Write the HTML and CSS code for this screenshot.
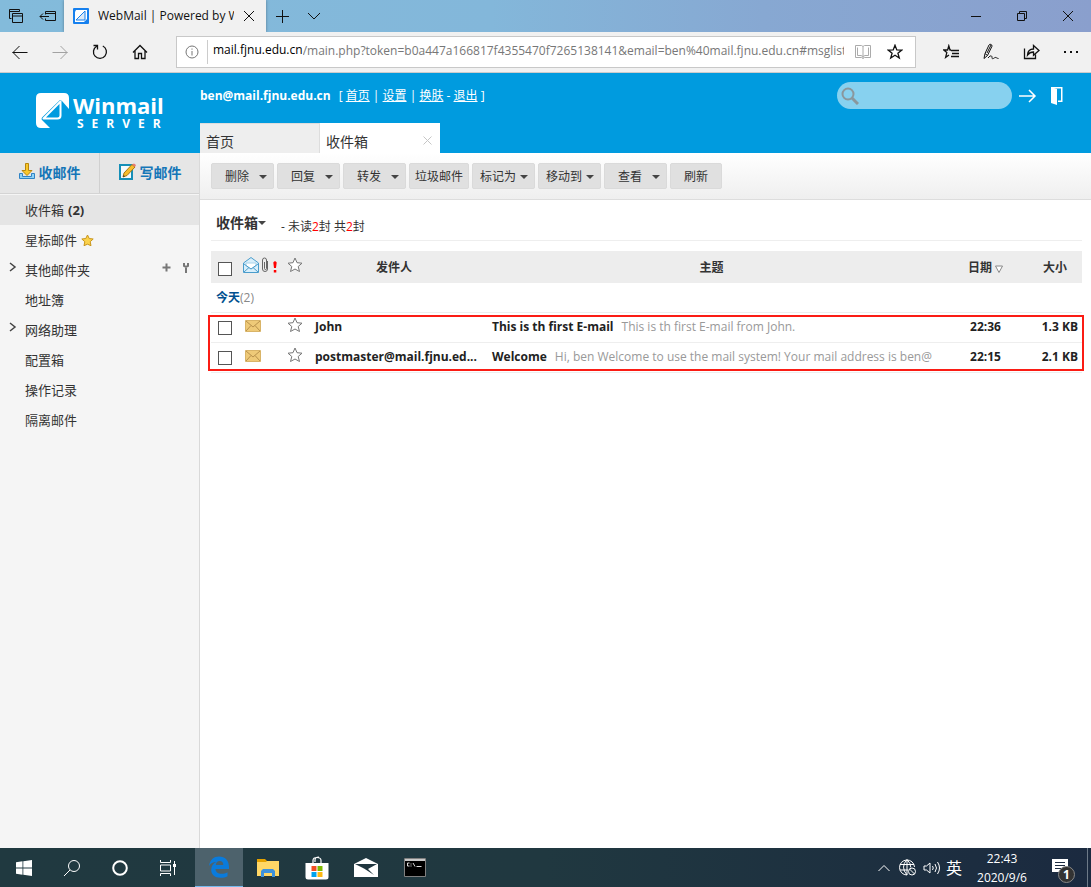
FILE: index.html
```html
<!DOCTYPE html>
<html lang="zh-CN">
<head>
<meta charset="utf-8">
<title>WebMail | Powered by Winmail Server</title>
<link rel="stylesheet" href="styles.css">
</head>
<body>
<header class="titlebar">
  <button class="tb-btn" aria-label="Tabs set aside"><svg width="16" height="16" viewBox="0 0 16 16" class="line"><path d="M3.500 10.500h-2v-9h10v2M1.500 3.500h10M4.500 5.500h10v9h-10zM4.500 8h10" /></svg></button>
  <button class="tb-btn" aria-label="Set tabs aside"><svg width="18" height="16" viewBox="0 0 18 16" class="line"><path d="M6.500 6.500v-3h10v9h-10v-2M6.500 5.500h10M1 8.500h9M4 5.500l-3 3 3 3"/></svg></button>
  <div class="browser-tab">
    <svg width="16" height="16" viewBox="0 0 16 16"><rect width="16" height="16" rx="1" fill="#1680ee"/><path d="M3 2h11v9l-3 3H2V4z" fill="#fff"/><path d="M3 12L12 3v9z" fill="#dceaf8" stroke="#1680ee"/></svg>
    <span class="tab-title">WebMail | Powered by W</span>
    <button class="tab-x" aria-label="Close tab"><svg width="12" height="12" viewBox="0 0 12 12" class="line"><path d="M1 1l10 10M11 1L1 11"/></svg></button>
  </div>
  <button class="tb-btn" aria-label="New tab"><svg width="14" height="14" viewBox="0 0 14 14" class="line"><path d="M7.500 1v13M1 7.500h13"/></svg></button>
  <button class="tb-btn" aria-label="Tab previews"><svg width="14" height="14" viewBox="0 0 14 14" class="line"><path d="M1 4l6 6 6-6"/></svg></button>
  <div class="window-controls">
    <button aria-label="Minimize"><svg width="12" height="12" viewBox="0 0 12 12" class="line"><path d="M1 6.500h10"/></svg></button>
    <button aria-label="Restore"><svg width="12" height="12" viewBox="0 0 12 12" class="line"><path d="M1.500 3.500h7v7h-7zM3.500 3.500v-2h7v7h-2"/></svg></button>
    <button aria-label="Close"><svg width="12" height="12" viewBox="0 0 12 12" class="line"><path d="M1 1l10 10M11 1L1 11"/></svg></button>
  </div>
</header>

<div class="navbar">
  <button class="nav-btn" aria-label="Back"><svg width="16" height="15" viewBox="0 0 16 15" class="line"><path d="M0.500 7.500h15M7.500 1L1 7.500 7.500 14"/></svg></button>
  <button class="nav-btn disabled" aria-label="Forward"><svg width="16" height="15" viewBox="0 0 16 15" class="line"><path d="M0.500 7.500h15M8.500 1L15 7.500 8.500 14"/></svg></button>
  <button class="nav-btn" aria-label="Refresh"><svg width="16" height="16" viewBox="0 0 16 16" class="line thick"><path d="M10.800 2a6.500 6.500 0 1 1-6.100.2M1.500 1.500h4v4"/></svg></button>
  <button class="nav-btn" aria-label="Home"><svg width="16" height="16" viewBox="0 0 16 16" class="line thick"><path d="M1 8.500L8 1.500l7 7M3 7v7.500h3.500v-5h3v5H13V7"/></svg></button>
  <div class="address">
    <svg class="info" width="14" height="14" viewBox="0 0 14 14"><circle cx="7" cy="7" r="6" fill="none" stroke="#767676"/><path d="M7 6v4.500M7 3.500v1.200" stroke="#767676"/></svg>
    <label class="host" for="url">mail.fjnu.edu.cn</label><input id="url" class="url" type="text" value="/main.php?token=b0a447a166817f4355470f7265138141&amp;email=ben%40mail.fjnu.edu.cn#msglist">
    <button class="addr-btn disabled" aria-label="Reading view"><svg width="16" height="14" viewBox="0 0 16 14" class="line"><path d="M.5 .5h6l1.500 1 1.500-1h6v12h-6l-1.500 1-1.500-1h-6zM8 1.500v12M2.500 2.500v8H6l2 1 2-1h3.500v-8"/></svg></button>
    <button class="addr-btn" aria-label="Add to favorites"><svg width="16" height="16" viewBox="0 0 16 16" class="line thick"><path d="M8 1.200l1.800 4.700 5 .2-3.900 3.100 1.400 4.900L8 11.300l-4.300 2.800 1.400-4.900L1.200 6.100l5-.2z"/></svg></button>
  </div>
  <button class="nav-btn" aria-label="Favorites"><svg width="16" height="16" viewBox="0 0 16 16" class="line thick"><path d="M8 6H7L5.800 1.800 4.600 6H.8l3 2.600-1.200 4.800L6 11M8 6.500h8M9 9.500h7M8 12.500h8"/></svg></button>
  <button class="nav-btn" aria-label="Notes"><svg width="16" height="18" viewBox="0 0 16 18" class="line"><path d="M1 15.500l1-5L6 2c.6-1.500 3.500-.5 3 1.200L4.500 12.500zM2 10.500l2.500 2M4 10l4-8M5 15c2-2.500 4-3 4-.5s2 .5 3 0 2 1 3.500 1"/></svg></button>
  <button class="nav-btn" aria-label="Share"><svg width="17" height="16" viewBox="0 0 17 16" class="line thick"><path d="M1.500 4.500v10h11v-4M4.500 11c.3-4 2.500-6 6-6V1.500L16 6.500l-5.500 4.800V8C8 8 6 9 4.500 11z"/></svg></button>
  <button class="nav-btn" aria-label="More"><svg width="16" height="4" viewBox="0 0 16 4"><path d="M1 1h2v2H1zM7 1h2v2H7zM13 1h2v2h-2z" fill="#111"/></svg></button>
</div>

<div class="mail-header">
  <div class="logo">
    <svg width="34" height="35" viewBox="0 0 34 35"><path d="M5 0h23q5 0 5 5v11L26 8 24 7 6 24.500Q5 26 6 27l8 8H5q-5 0-5-5V5q0-5 5-5z" fill="#fff"/><path d="M24.500 8.500v14q0 3-3 3H7.500z" fill="none" stroke="#fff" stroke-width="2" stroke-linejoin="round"/></svg>
    <div class="logo-text"><div class="logo-name">Winmail</div><div class="logo-sub">SERVER</div></div>
  </div>
  <div class="header-main">
    <div class="account-row">
      <strong>ben@mail.fjnu.edu.cn</strong>
      <span class="account-links">[ <a href="#">首页</a> | <a href="#">设置</a> | <a href="#">换肤</a> - <a href="#">退出</a> ]</span>
      <form class="search">
        <label class="search-box" for="q"><svg width="18" height="18" viewBox="0 0 18 18" fill="none" stroke="#8a979d" stroke-width="2"><circle cx="7" cy="7" r="5.500"/><path d="M11 11l6 6" stroke-width="3"/></svg><input id="q" type="text" aria-label="搜索"></label>
        <button type="button" aria-label="搜索邮件"><svg width="18" height="14" viewBox="0 0 18 14" fill="none" stroke="#fff" stroke-width="1.500"><path d="M0 7h16M10 1l6 6-6 6"/></svg></button>
        <button type="button" aria-label="退出登录"><svg width="14" height="20" viewBox="0 0 14 20" fill="#fff"><path d="M1 1l6 2v16l-6-2z"/><path d="M1 1h11.500v15H8v-1.500h3v-12H1z"/></svg></button>
      </form>
    </div>
    <nav class="tabs">
      <a class="tab" href="#">首页</a>
      <a class="tab current" href="#">收件箱<svg width="9" height="9" viewBox="0 0 9 9"><path d="M.5.5l8 8M8.500.5l-8 8" stroke="#c6c6c6"/></svg></a>
    </nav>
  </div>
</div>

<div class="workspace">
  <aside class="sidebar">
    <div class="side-actions">
      <button><svg width="16" height="18" viewBox="0 0 16 18"><path d="M.5 10.500h3v3h9v-3h3v5H.5z" fill="#8fd2f7" stroke="#2f83c5"/><path d="M6.500.5h3v7h3.500L8 12.500 3 7.500h3.500z" fill="#f8c72c" stroke="#b8860c"/></svg>收邮件</button>
      <button><svg width="18" height="18" viewBox="0 0 18 18"><path d="M2 2h12v14H2z" fill="#f5fafc" stroke="#168fb7" stroke-width="2"/><path d="M6 10l8-8.500 3 2.500-8 8.500-4 1.500z" fill="#f7bd2c" stroke="#a87712"/><path d="M14 1.500l3 2.500 1-2-2-1.500z" fill="#e87870"/><path d="M5 14l.6-2 1.400 1.200z" fill="#333"/></svg>写邮件</button>
    </div>
    <nav class="folders">
      <a class="folder current" href="#">收件箱 <b>(2)</b></a>
      <a class="folder" href="#">星标邮件 <svg width="13" height="13" viewBox="0 0 13 13"><path d="M6.500 1l1.700 3.500 4 .5-3 2.700.8 4-3.500-1.500-3.500 1.500.8-4-3-2.700 4-.5z" fill="#fbd24c" stroke="#c8951c"/></svg></a>
      <div class="folder"><svg class="expand" width="8" height="10" viewBox="0 0 8 10"><path d="M1 1l5 4-5 4"/></svg><a href="#">其他邮件夹</a><span class="folder-tools"><button aria-label="新建邮件夹"><svg width="9" height="9" viewBox="0 0 9 9"><path d="M4.500 0.500v8M.5 4.500h8" stroke="#777" stroke-width="2"/></svg></button><button aria-label="管理邮件夹"><svg width="8" height="10" viewBox="0 0 8 10"><path d="M2 0v3l2 1 2-1V0M4 4v6" fill="none" stroke="#777" stroke-width="2"/></svg></button></span></div>
      <a class="folder" href="#">地址簿</a>
      <div class="folder"><svg class="expand" width="8" height="10" viewBox="0 0 8 10"><path d="M1 1l5 4-5 4"/></svg><a href="#">网络助理</a></div>
      <a class="folder" href="#">配置箱</a>
      <a class="folder" href="#">操作记录</a>
      <a class="folder" href="#">隔离邮件</a>
    </nav>
  </aside>

  <main class="main">
    <div class="toolbar">
      <button class="menu"><span>删除</span><i class="caret"></i></button>
      <button class="menu"><span>回复</span><i class="caret"></i></button>
      <button class="menu"><span>转发</span><i class="caret"></i></button>
      <button class="spam">垃圾邮件</button>
      <button class="menu"><span>标记为</span><i class="caret"></i></button>
      <button class="menu"><span>移动到</span><i class="caret"></i></button>
      <button class="menu"><span>查看</span><i class="caret"></i></button>
      <button class="refresh">刷新</button>
    </div>
    <div class="content">
      <div class="box-title">
        <h1><button>收件箱<i class="caret"></i></button></h1>
        <p>- 未读<em>2</em>封 共<em>2</em>封</p>
      </div>
      <div class="list">
        <table>
          <colgroup><col class="c-check"><col class="c-kind"><col class="c-star"><col class="c-from"><col><col class="c-date"><col class="c-size"></colgroup>
          <thead>
            <tr>
              <th><input type="checkbox" aria-label="全选"></th>
              <th><div class="icons"><svg width="16" height="16" viewBox="0 0 16 16"><path d="M.5 6L8 .5 15.500 6v9.500H.5z" fill="#d9effb" stroke="#4b9dcc"/><path d="M3 6h10v3l-5 3-5-3z" fill="#fff" stroke="#a9d3ea"/><path d="M1 7l7 5 7-5M1 15l5-4.500M15 15l-5-4.500" fill="none" stroke="#4b9dcc"/></svg><svg width="8" height="16" viewBox="0 0 8 16"><path d="M6.500 4v8a2.500 2.500 0 0 1-5 0V3a2 2 0 0 1 4 0v8.500a1 1 0 0 1-2 0V5" fill="none" stroke="#666"/></svg><svg class="urgent" width="4" height="12" viewBox="0 0 4 12"><path d="M.3 1.500Q2-1 3.700 1.500L3 7H1zM.8 9h2.500v2.500H.8z" fill="#f00"/></svg></div></th>
              <th><svg width="16" height="16" viewBox="0 0 16 16" class="star"><path d="M8 1l2 4.700 5 .5-3.800 3.300 1.300 5L8 12l-4.500 2.500 1.300-5L1 6.200l5-.5z"/></svg></th>
              <th class="label">发件人</th><th class="label">主题</th>
              <th class="label">日期 <svg width="8" height="8" viewBox="0 0 8 8"><path d="M.5 1h7L4 7.500z" fill="#fff" stroke="#888"/></svg></th><th class="label">大小</th>
            </tr>
          </thead>
          <tbody>
            <tr class="group"><td colspan="7"><b>今天</b>(2)</td></tr>
            <tr class="mail">
              <td><input type="checkbox" aria-label="John"></td>
              <td><svg width="16" height="12" viewBox="0 0 16 12" class="envelope"><path d="M.5.5h15v11H.5z" fill="#efca78" stroke="#d9b468"/><path d="M1 1l7 6 7-6M1 11l5-5.500M15 11l-5-5.500" fill="none" stroke="#b8914c"/></svg></td>
              <td><svg width="16" height="16" viewBox="0 0 16 16" class="star"><path d="M8 1l2 4.700 5 .5-3.800 3.300 1.300 5L8 12l-4.500 2.500 1.300-5L1 6.200l5-.5z"/></svg></td>
              <td class="from">John</td>
              <td class="subject"><b>This is th first E-mail</b><span>This is th first E-mail from John.</span></td>
              <td class="date">22:36</td><td class="size">1.3 KB</td>
            </tr>
            <tr class="mail">
              <td><input type="checkbox" aria-label="postmaster"></td>
              <td><svg width="16" height="12" viewBox="0 0 16 12" class="envelope"><path d="M.5.5h15v11H.5z" fill="#efca78" stroke="#d9b468"/><path d="M1 1l7 6 7-6M1 11l5-5.500M15 11l-5-5.500" fill="none" stroke="#b8914c"/></svg></td>
              <td><svg width="16" height="16" viewBox="0 0 16 16" class="star"><path d="M8 1l2 4.700 5 .5-3.800 3.300 1.300 5L8 12l-4.500 2.500 1.300-5L1 6.200l5-.5z"/></svg></td>
              <td class="from">postmaster@mail.fjnu.ed...</td>
              <td class="subject"><b>Welcome</b><span>Hi, ben Welcome to use the mail system! Your mail address is ben@</span></td>
              <td class="date">22:15</td><td class="size">2.1 KB</td>
            </tr>
          </tbody>
        </table>
        <div class="highlight"></div>
      </div>
    </div>
  </main>
</div>

<footer class="taskbar">
  <div class="task-group">
    <button aria-label="Start"><svg width="16" height="16" viewBox="0 0 16 16" fill="#fff"><path d="M0 2.200l6.500-.9v6.200H0zM7.300 1.200L16 0v7.500H7.300zM0 8.400h6.500v6.300L0 13.800zM7.300 8.400H16V16l-8.700-1.200z"/></svg></button>
    <button aria-label="Search"><svg width="18" height="18" viewBox="0 0 18 18" class="white"><circle cx="11" cy="7" r="5.500"/><path d="M7 11l-6 6"/></svg></button>
    <button aria-label="Cortana"><svg width="18" height="18" viewBox="0 0 18 18" class="white"><circle cx="9" cy="9" r="6.800" stroke-width="2"/></svg></button>
    <button aria-label="Task view"><svg width="18" height="16" viewBox="0 0 18 16" class="white"><path d="M1.500 0v2.500h10V0M1.500 5h10v6h-10zM1.500 16v-2.500h10V16M15.500 1v14"/><path d="M14 4h3v3h-3z" fill="#fff" stroke="none"/></svg></button>
  </div>
  <div class="task-group apps">
    <button class="active" aria-label="Edge"><svg width="22" height="22" viewBox="0 0 22 22"><path d="M1 10C2 3.500 6 .5 11 .5c6 0 10 4 10 10.500v2H7.500c.2 3.500 3 4.800 6 4.800 2.300 0 4.300-.6 6-1.600v4c-2 1-4.300 1.500-7 1.500-6 0-9.300-3.300-9.300-8 0-3.500 2-6.300 5-7.700C5 6 2.500 7.500 1 10zm6.800-1h7.500c0-2.500-1.300-4-3.600-4-2.200 0-3.600 1.600-3.900 4z" fill="#0a7bdc"/></svg></button>
    <button aria-label="File Explorer"><svg width="22" height="18" viewBox="0 0 22 18"><path d="M0 0h8l2 2h12v15H0z" fill="#e5a200"/><path d="M0 3h9l1-1h12v15H0z" fill="#ffd766"/><path d="M4 18v-6l2-2h10l2 2v6h-3v-4H7v4z" fill="#3d92dc"/></svg></button>
    <button aria-label="Store"><svg width="24" height="24" viewBox="0 0 24 24"><path d="M8 7V4.500Q8 1.500 12 1.500t4 3V7M10 6V4q0-3 4-3" fill="none" stroke="#fff" stroke-width="1.200"/><path d="M.5 7h23v14q0 2.500-2.500 2.500H3Q.5 23.500.5 21z" fill="#fff"/><path d="M6.500 10h5v5h-5z" fill="#f04e23"/><path d="M12.500 10h5v5h-5z" fill="#7db800"/><path d="M6.500 16h5v5h-5z" fill="#00a2ed"/><path d="M12.500 16h5v5h-5z" fill="#fdb813"/></svg></button>
    <button aria-label="Mail"><svg width="24" height="20" viewBox="0 0 24 20"><path d="M0 6l12-6 12 6v13H0z" fill="#fff"/><path d="M1 6h22l-9 5 6 6L10 10.500z" fill="#20363f"/></svg></button>
    <button aria-label="Command Prompt"><svg width="22" height="19" viewBox="0 0 22 19"><path d="M.5.5h21v18H.5z" fill="#000" stroke="#808080"/><path d="M1 1h20v2H1z" fill="#c9c9c9"/><path d="M5.500 5H3.500v3h2M7 5.500v1M7 7.500v1M9 5l2 3.500M12.500 8.500h5" fill="none" stroke="#ddd"/></svg></button>
  </div>
  <div class="tray">
    <button aria-label="Hidden icons"><svg width="14" height="8" viewBox="0 0 14 8" class="white"><path d="M1.500 7L7 1.500 12.500 7"/></svg></button>
    <button aria-label="Network"><svg width="18" height="17" viewBox="0 0 18 17" class="white"><path d="M8 16A7.500 7.500 0 1 1 15.500 8M8 .5q-7 7.500 0 15.500M8 .5q4 4 3.800 8M1 5.500h14M1 11h8M8 1v15"/><circle cx="13" cy="12.500" r="3.500" fill="#1d3040"/><path d="M10.500 10l5 5"/></svg></button>
    <button aria-label="Volume"><svg width="18" height="14" viewBox="0 0 18 14" class="white"><path d="M1 5h2.500L7 2v10L3.500 9H1zM9.500 5q1.500 2 0 4M12 3q3 4 0 8M14.500 1q4 6 0 12"/></svg></button>
    <button class="ime">英</button>
    <button class="clock"><span>22:43</span><span>2020/9/6</span></button>
    <button class="notice" aria-label="Notifications"><svg width="16" height="17" viewBox="0 0 16 17"><path d="M0 0h16v13h-5v4l-4-4H0z" fill="#fff"/><path d="M3 3.500h10M3 6.500h10M3 9.500h7" stroke="#1c2b42"/></svg><span class="badge">1</span></button>
  </div>
</footer>
</body>
</html>
```
FILE: styles.css
```css
* { box-sizing: border-box; }
html { height: 100%; }
body {
  margin: 0;
  height: 100vh;
  display: flex;
  flex-direction: column;
  font: 12px/18px "Open Sans", "Noto Sans CJK SC", sans-serif;
  color: #333;
  background: #fff;
}
button {
  border: 0;
  padding: 0;
  background: none;
  font: inherit;
  color: inherit;
  display: flex;
  align-items: center;
  justify-content: center;
}
a { color: inherit; text-decoration: none; }
svg { flex: none; display: block; }
input { font: inherit; }
.line { fill: none; stroke: #111; }
.thick { stroke-width: 1.3; }
.white { fill: none; stroke: #fff; }

.titlebar {
  flex: none;
  height: 32px;
  display: flex;
  background: linear-gradient(90deg, #83bbdb 0%, #83b7da 45%, #87a8d2 70%, #8a9fcd 100%);
}
.tb-btn { width: 32px; }
.browser-tab {
  width: 202px;
  padding: 0 11px 0 9px;
  display: flex;
  align-items: center;
  gap: 9px;
  background: #f1f1f1;
  color: #111;
  box-shadow: 0 0 3px rgba(0, 0, 0, 0.35);
}
.tab-title { flex: 1; overflow: hidden; white-space: nowrap; }
.window-controls { margin-left: auto; display: flex; }
.window-controls button { width: 46px; }

.navbar {
  flex: none;
  height: 41px;
  display: flex;
  align-items: center;
  background: #f1f1f1;
  border-bottom: 1px solid #ccc;
  position: relative;
}
.nav-btn { width: 40px; height: 40px; }
.disabled { opacity: 0.35; }
.address {
  flex: 1;
  min-width: 0;
  height: 32px;
  margin: 0 15px 0 16px;
  padding-right: 4px;
  display: flex;
  align-items: center;
  border: 1px solid #c8c8c8;
  background: #fff;
}
.info { margin: 0 8px; }
.host {
  height: 24px;
  padding-left: 5px;
  border-left: 1px solid #ccc;
  line-height: 20px;
  color: #000;
}
.url {
  flex: 1;
  min-width: 0;
  height: 24px;
  padding: 0 0 4px;
  margin-right: 3px;
  border: 0;
  background: none;
  color: #777;
  line-height: 20px;
}
.addr-btn { width: 32px; height: 30px; }

.mail-header {
  flex: none;
  height: 80px;
  display: flex;
  background: #009bdf;
  color: #fff;
}
.logo {
  flex: none;
  width: 200px;
  padding: 20px 0 0 36px;
  display: flex;
  gap: 3px;
}
.logo-text { font-weight: 700; }
.logo-name { font-size: 22px; line-height: 24px; }
.logo-sub { padding-left: 4px; line-height: 14px; letter-spacing: 8px; }
.header-main {
  flex: 1;
  min-width: 0;
  display: flex;
  flex-direction: column;
  justify-content: space-between;
}
.account-row { height: 45px; display: flex; align-items: center; gap: 8px; }
.account-links a { text-decoration: underline; }
.search { margin-left: auto; padding-right: 27px; display: flex; align-items: center; }
.search-box {
  width: 175px;
  height: 27px;
  padding-left: 4px;
  display: flex;
  align-items: center;
  border-radius: 14px;
  background: #87d1ef;
}
.search-box input { width: 100%; margin: 0 8px; border: 0; background: none; }
.search button { margin-left: 7px; }
.search button + button { margin-left: 13px; }
.tabs { display: flex; height: 30px; }
.tab {
  width: 120px;
  padding: 7px 7px 0 6px;
  display: flex;
  justify-content: space-between;
  font-size: 14px;
  line-height: 22px;
  color: #333;
  background: #eee;
  border: solid #ddd;
  border-width: 1px 1px 0 0;
}
.tab svg { margin-top: 5px; }
.tab.current { background: #fff; border-color: #fff; }

.workspace { flex: 1; min-height: 0; display: flex; }
.sidebar {
  flex: none;
  width: 200px;
  background: #f5f5f5;
  border-right: 1px solid #d9d9d9;
}
.side-actions {
  height: 41px;
  display: flex;
  background: #e6e6e6;
  border-bottom: 1px solid #d4d4d4;
}
.side-actions button {
  flex: 1;
  gap: 4px;
  font-size: 14px;
  font-weight: 700;
  color: #1576b8;
}
.side-actions button + button { border-left: 1px solid #d0d0d0; }
.side-actions svg { margin-bottom: 3px; }
.folders { padding-top: 1px; font-size: 13px; }
.folder {
  position: relative;
  height: 30px;
  padding: 0 0 0 25px;
  display: flex;
  align-items: center;
  gap: 4px;
}
.folder.current { background: #e5e5e5; }
.expand { position: absolute; left: 9px; top: 7px; fill: none; stroke: #444; stroke-width: 1.5; }
.folder-tools { margin-left: auto; padding: 0 9px 5px 0; display: flex; gap: 11px; }

.main { flex: 1; min-width: 0; }
.toolbar {
  height: 47px;
  padding: 10px 11px;
  display: flex;
  gap: 3px;
  background: linear-gradient(#fff, #efefef);
  border-bottom: 1px solid #ddd;
}
.toolbar button {
  height: 26px;
  padding-top: 2px;
  border: 1px solid #dadada;
  border-radius: 2px;
  background: #e0e0e0;
}
.toolbar .menu { width: 63px; padding: 2px 6px 0 3px; }
.menu span { flex: 1; }
.toolbar .spam { width: 60px; }
.toolbar .refresh { width: 52px; }
.caret {
  width: 8px;
  height: 4px;
  background: #444;
  clip-path: polygon(0 0, 100% 0, 50% 100%);
}
.content { padding: 0 9px 0 11px; }
.box-title {
  height: 41px;
  padding: 6px 0 0 5px;
  display: flex;
  align-items: center;
  gap: 15px;
  border-bottom: 1px solid #eee;
}
.box-title h1 { margin: 0; font-size: 14px; line-height: 22px; }
.box-title p { margin: 0; padding-top: 7px; }
.box-title em { font-style: normal; color: #f00; }

.list { position: relative; margin-top: 10px; }
table { width: 100%; table-layout: fixed; border-collapse: collapse; }
.c-check { width: 28px; }
.c-kind { width: 44px; }
.c-star { width: 25px; }
.c-from { width: 172px; }
.c-date { width: 85px; }
.c-size { width: 54px; }
th, td { padding: 0; overflow: hidden; white-space: nowrap; }
th { height: 32px; background: #ededed; font-weight: 700; }
th.label { padding-top: 2px; }
th.label svg { display: inline-block; vertical-align: middle; }
.icons { display: flex; align-items: center; gap: 2px; padding: 0 0 4px 4px; }
.urgent { margin: 4px 0 0 2px; }
input[type="checkbox"] {
  appearance: none;
  display: block;
  width: 14px;
  height: 14px;
  margin: 3px 0 0 7px;
  border: 1px solid #555;
  background: #fff;
}
.star { margin: 0 0 4px 4px; fill: #fff; stroke: #777; }
.group td { height: 29px; padding: 2px 0 0 5px; color: #888; border-bottom: 1px solid #eee; }
.group b { color: #00508f; }
.mail td { height: 30px; border-bottom: 1px solid #eee; }
.mail input[type="checkbox"] { margin-top: 1px; }
.mail .envelope { margin: 0 0 3px 6px; }
.mail .from { padding-left: 7px; font-weight: 700; color: #222; }
.mail .subject { padding-left: 12px; }
.subject b { margin-right: 8px; color: #222; }
.subject span { color: #999; }
.date { text-align: center; font-weight: 700; color: #222; }
.size { padding-right: 4px; text-align: right; font-weight: 700; color: #222; }
.highlight {
  position: absolute;
  top: 64px;
  left: -3px;
  right: -2px;
  height: 56px;
  border: 2px solid #fb1c14;
  pointer-events: none;
}

.taskbar {
  flex: none;
  height: 39px;
  display: flex;
  background: linear-gradient(90deg, #203940 0%, #203840 50%, #1b2a40 100%);
  color: #fff;
}
.task-group { display: flex; }
.task-group button { width: 48px; }
.apps { margin-left: 3px; gap: 1px; }
.apps .active { background: #4d626c; border-bottom: 1px solid #76b9ed; }
.tray { margin-left: auto; padding-right: 3px; display: flex; }
.tray button { width: 24px; }
.tray .ime { width: 20px; font-size: 16px; }
.tray .clock { width: 76px; flex-direction: column; line-height: 19px; }
.tray .notice { width: 48px; position: relative; padding-right: 8px; border-right: 1px solid #6d7a88; }
.badge {
  position: absolute;
  left: 18px;
  top: 18px;
  width: 17px;
  height: 17px;
  border: 1px solid #888;
  border-radius: 50%;
  background: #333;
  line-height: 15px;
  font-weight: 700;
}
```
